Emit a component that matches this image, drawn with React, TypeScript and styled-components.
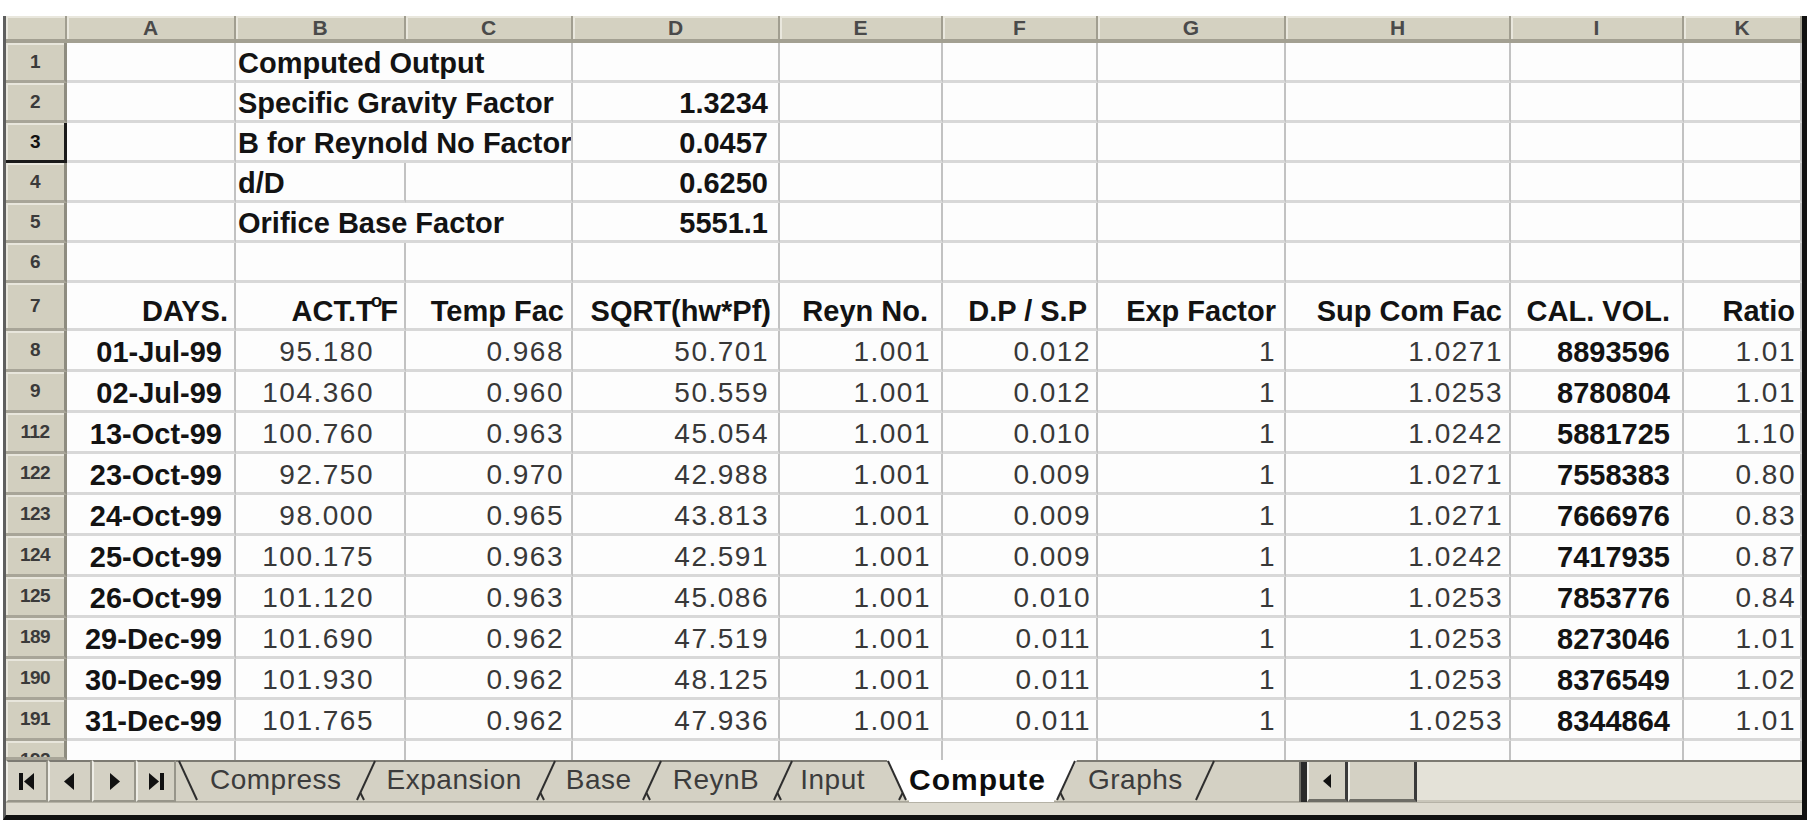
import React from "react";
import styled, { createGlobalStyle } from "styled-components";

const GlobalStyle = createGlobalStyle`
  *, *::before, *::after { box-sizing: border-box; }
  html, body { margin: 0; padding: 0; background: #fff; }
  body { font-family: "Liberation Sans", Arial, sans-serif; }
`;

type Align = "left" | "right";

type CellDef = {
  text?: React.ReactNode;
  bold?: boolean;
  align?: Align;
  span?: number;
  pad?: number;
};

const columns = ["A", "B", "C", "D", "E", "F", "G", "H", "I", "K"];

const topRows: { label: string; cells: CellDef[] }[] = [
  { label: "1", cells: [{}, { text: "Computed Output", bold: true, align: "left", span: 2 }, {}, {}, {}, {}, {}, {}, {}] },
  { label: "2", cells: [{}, { text: "Specific Gravity Factor", bold: true, align: "left", span: 2 }, { text: "1.3234", bold: true, pad: 10 }, {}, {}, {}, {}, {}, {}] },
  { label: "3", cells: [{}, { text: "B for Reynold No Factor", bold: true, align: "left", span: 2 }, { text: "0.0457", bold: true, pad: 10 }, {}, {}, {}, {}, {}, {}] },
  { label: "4", cells: [{}, { text: "d/D", bold: true, align: "left" }, {}, { text: "0.6250", bold: true, pad: 10 }, {}, {}, {}, {}, {}, {}] },
  { label: "5", cells: [{}, { text: "Orifice Base Factor", bold: true, align: "left", span: 2 }, { text: "5551.1", bold: true, pad: 10 }, {}, {}, {}, {}, {}, {}] },
  { label: "6", cells: [{}, {}, {}, {}, {}, {}, {}, {}, {}, {}] },
];

const headPads = [6, 6, 7, 7, 13, 9, 8, 7, 12, 5];
const dataPads = [12, 30, 7, 9, 10, 5, 8, 6, 12, 4];
const boldCols = [0, 8];

const dataRows = [
  ["8", "01-Jul-99", "95.180", "0.968", "50.701", "1.001", "0.012", "1", "1.0271", "8893596", "1.01"],
  ["9", "02-Jul-99", "104.360", "0.960", "50.559", "1.001", "0.012", "1", "1.0253", "8780804", "1.01"],
  ["112", "13-Oct-99", "100.760", "0.963", "45.054", "1.001", "0.010", "1", "1.0242", "5881725", "1.10"],
  ["122", "23-Oct-99", "92.750", "0.970", "42.988", "1.001", "0.009", "1", "1.0271", "7558383", "0.80"],
  ["123", "24-Oct-99", "98.000", "0.965", "43.813", "1.001", "0.009", "1", "1.0271", "7666976", "0.83"],
  ["124", "25-Oct-99", "100.175", "0.963", "42.591", "1.001", "0.009", "1", "1.0242", "7417935", "0.87"],
  ["125", "26-Oct-99", "101.120", "0.963", "45.086", "1.001", "0.010", "1", "1.0253", "7853776", "0.84"],
  ["189", "29-Dec-99", "101.690", "0.962", "47.519", "1.001", "0.011", "1", "1.0253", "8273046", "1.01"],
  ["190", "30-Dec-99", "101.930", "0.962", "48.125", "1.001", "0.011", "1", "1.0253", "8376549", "1.02"],
  ["191", "31-Dec-99", "101.765", "0.962", "47.936", "1.001", "0.011", "1", "1.0253", "8344864", "1.01"],
];

type EdgeKind = "start" | "join" | "activeStart" | "activeEnd" | "end";

const tabs: { name: string; padL: number; padR: number; after: EdgeKind; active?: boolean }[] = [
  { name: "Compress", padL: 10, padR: 12, after: "join" },
  { name: "Expansion", padL: 9, padR: 12, after: "join" },
  { name: "Base", padL: 8, padR: 8, after: "join" },
  { name: "ReynB", padL: 9, padR: 12, after: "join" },
  { name: "Input", padL: 5, padR: 20, after: "activeStart" },
  { name: "Compute", padL: 0, padR: 8, after: "activeEnd", active: true },
  { name: "Graphs", padL: 10, padR: 10, after: "end" },
];

const TabEdge = ({ kind }: { kind: EdgeKind }) => (
  <EdgeSvg width="24" height="42" viewBox="0 0 24 42">
    {kind === "activeStart" && <polygon points="2,0 24,0 24,40 21,40" fill="#fff" />}
    {kind === "activeEnd" && <polygon points="0,0 23,0 3,40 0,40" fill="#fff" />}
    {(kind === "start" || kind === "activeStart") && (
      <line x1="3" y1="1" x2="21" y2="40" stroke="#2e2e2e" strokeWidth="2" />
    )}
    {(kind === "join" || kind === "activeEnd" || kind === "end") && (
      <line x1="3" y1="40" x2="21" y2="1" stroke="#2e2e2e" strokeWidth="2" />
    )}
    {(kind === "join" || kind === "activeEnd") && (
      <line x1="6.5" y1="33" x2="10" y2="40" stroke="#2e2e2e" strokeWidth="2" />
    )}
    {kind === "activeStart" && (
      <line x1="14" y1="40" x2="17.6" y2="33" stroke="#2e2e2e" strokeWidth="2" />
    )}
  </EdgeSvg>
);

const NavGlyph = ({ kind }: { kind: "first" | "prev" | "next" | "last" }) => (
  <svg width="16" height="19" viewBox="0 0 16 19">
    {kind === "first" && (
      <>
        <rect x="0" y="1" width="4" height="17" fill="#111" />
        <polygon points="15,1 5,9.5 15,18" fill="#111" />
      </>
    )}
    {kind === "prev" && <polygon points="12,1 2,9.5 12,18" fill="#111" />}
    {kind === "next" && <polygon points="4,1 14,9.5 4,18" fill="#111" />}
    {kind === "last" && (
      <>
        <polygon points="1,1 11,9.5 1,18" fill="#111" />
        <rect x="12" y="1" width="4" height="17" fill="#111" />
      </>
    )}
  </svg>
);

export default function App() {
  return (
    <>
      <GlobalStyle />
      <Frame>
        <Sheet>
          <ColHead />
          {columns.map(c => (
            <ColHead key={c}>{c}</ColHead>
          ))}

          {topRows.map(r => (
            <React.Fragment key={r.label}>
              <RowHead $active={r.label === "3"}>{r.label}</RowHead>
              {r.cells.map((c, i) => (
                <Cell
                  key={i}
                  $bold={c.bold}
                  $align={c.align}
                  $span={c.span}
                  $pad={c.pad}
                >
                  {c.text}
                </Cell>
              ))}
            </React.Fragment>
          ))}

          <RowHead>7</RowHead>
          {[
            "DAYS.",
            <>
              ACT.T<Degree>o</Degree>F
            </>,
            "Temp Fac",
            "SQRT(hw*Pf)",
            "Reyn No.",
            "D.P / S.P",
            "Exp Factor",
            "Sup Com Fac",
            "CAL. VOL.",
            "Ratio",
          ].map((h, i) => (
            <Cell key={i} $bold $pad={headPads[i]}>
              {h}
            </Cell>
          ))}

          {dataRows.map(([label, ...vals]) => (
            <React.Fragment key={label}>
              <RowHead>{label}</RowHead>
              {vals.map((v, i) => (
                <Cell key={i} $bold={boldCols.includes(i)} $pad={dataPads[i]}>
                  {v}
                </Cell>
              ))}
            </React.Fragment>
          ))}

          <RowHead $partial>192</RowHead>
          {columns.map(c => (
            <Cell key={c} $last />
          ))}
        </Sheet>

        <TabStrip>
          <NavGroup>
            <NavButton $w={42}>
              <NavGlyph kind="first" />
            </NavButton>
            <NavButton $w={44}>
              <NavGlyph kind="prev" />
            </NavButton>
            <NavButton $w={44}>
              <NavGlyph kind="next" />
            </NavButton>
            <NavButton $w={40}>
              <NavGlyph kind="last" />
            </NavButton>
          </NavGroup>

          <TabRow>
            <TabEdge kind="start" />
            {tabs.map(t => (
              <React.Fragment key={t.name}>
                <TabLabel $active={t.active} $padL={t.padL} $padR={t.padR}>
                  {t.name}
                </TabLabel>
                <TabEdge kind={t.after} />
              </React.Fragment>
            ))}
          </TabRow>

          <Spacer />

          <ScrollArea>
            <Splitter />
            <ScrollButton>
              <svg width="9" height="14" viewBox="0 0 9 14">
                <polygon points="8,0 0,7 8,14" fill="#111" />
              </svg>
            </ScrollButton>
            <Thumb />
            <Track />
          </ScrollArea>
        </TabStrip>
        <BottomBand />
      </Frame>
    </>
  );
}

const Frame = styled.div`
  margin: 16px 0 0 3px;
  width: 1804px;
  border-left: 3px solid #5f5f5f;
  border-right: 5px solid #111;
  border-bottom: 5px solid #111;
  display: flex;
  flex-direction: column;
`;

const Sheet = styled.div`
  display: grid;
  grid-template-columns: 61px 169px 170px 167px 207px 163px 155px 188px 225px 173px 118px;
  grid-template-rows: 27px repeat(6, 40px) 48px repeat(10, 41px) 19px;
  background: #fdfdfd;
  overflow: hidden;
`;

const ColHead = styled.div`
  display: flex;
  align-items: center;
  justify-content: center;
  background: #d4d1c1;
  border-right: 2px solid #a19e90;
  border-bottom: 4px solid #a3a092;
  box-shadow: inset 2px 2px 0 #e9e7dd;
  font-size: 21px;
  font-weight: 700;
  color: #4a4a4a;
`;

const RowHead = styled.div<{ $active?: boolean; $partial?: boolean }>`
  display: flex;
  align-items: ${p => (p.$partial ? "flex-start" : "center")};
  justify-content: center;
  padding-top: ${p => (p.$partial ? 8 : 0)}px;
  overflow: hidden;
  background: #d2cfbf;
  border-right: 3px solid ${p => (p.$active ? "#1a1a1a" : "#8e8c80")};
  border-bottom: 3px solid ${p => (p.$active ? "#1a1a1a" : "#a8a598")};
  box-shadow: inset 2px 2px 0 #e8e6dc;
  font-size: 19px;
  font-weight: 700;
  letter-spacing: -0.5px;
  color: ${p => (p.$active ? "#111" : "#3a3a3a")};
`;

const Cell = styled.div<{
  $bold?: boolean;
  $align?: Align;
  $span?: number;
  $pad?: number;
  $last?: boolean;
}>`
  display: flex;
  align-items: flex-end;
  justify-content: ${p => (p.$align === "left" ? "flex-start" : "flex-end")};
  grid-column: span ${p => p.$span ?? 1};
  padding: 0 ${p => (p.$align === "left" ? 0 : p.$pad ?? 8)}px 4px
    ${p => (p.$align === "left" ? 2 : 0)}px;
  border-right: 2px solid #c2c2c2;
  border-bottom: ${p => (p.$last ? "none" : "3px solid #d8d8d8")};
  white-space: nowrap;
  overflow: hidden;
  line-height: 26px;
  font-size: ${p => (p.$bold ? 29 : 28)}px;
  font-weight: ${p => (p.$bold ? 700 : 400)};
  letter-spacing: ${p => (p.$bold ? 0 : 1.5)}px;
  color: ${p => (p.$bold ? "#131313" : "#383838")};
`;

const Degree = styled.span`
  font-size: 19px;
  position: relative;
  top: -10px;
  margin: 0 -2px 0 -3px;
`;

const TabStrip = styled.div`
  display: flex;
  height: 42px;
  background: #d4d1c4;
  box-shadow: inset 0 2px 0 #7c7a72, inset 0 -1px 0 #a9a69a;
`;

const NavGroup = styled.div`
  display: flex;
`;

const NavButton = styled.div<{ $w: number }>`
  width: ${p => p.$w}px;
  display: flex;
  align-items: center;
  justify-content: center;
  border-top: 2px solid #7c7a72;
  border-left: 2px solid #eeede6;
  border-right: 2px solid #97958a;
  border-bottom: 2px solid #97958a;
`;

const TabRow = styled.div`
  display: flex;
  align-items: stretch;
`;

const EdgeSvg = styled.svg`
  display: block;
  flex-shrink: 0;
`;

const TabLabel = styled.div<{ $active?: boolean; $padL: number; $padR: number }>`
  display: flex;
  align-items: center;
  padding: 0 ${p => p.$padR}px 2px ${p => p.$padL}px;
  background: ${p => (p.$active ? "#fff" : "transparent")};
  font-size: ${p => (p.$active ? 30 : 28)}px;
  font-weight: ${p => (p.$active ? 700 : 400)};
  letter-spacing: ${p => (p.$active ? 1 : 0.5)}px;
  color: ${p => (p.$active ? "#0d0d0d" : "#3c3c3c")};
  white-space: nowrap;
`;

const Spacer = styled.div`
  flex: 1;
`;

const ScrollArea = styled.div`
  width: 503px;
  flex-shrink: 0;
  display: flex;
  padding-top: 2px;
`;

const Splitter = styled.div`
  width: 8px;
  background: #2b2b2b;
  border-left: 2px solid #6e6d66;
`;

const ScrollButton = styled.div`
  width: 41px;
  display: flex;
  align-items: center;
  justify-content: center;
  background: #d4d1c4;
  border-left: 2px solid #f1f0ea;
  border-right: 3px solid #3a3a3a;
  border-bottom: 3px solid #6e6d66;
`;

const Thumb = styled.div`
  width: 69px;
  background: #d4d1c4;
  border-left: 2px solid #f1f0ea;
  border-right: 3px solid #3a3a3a;
  border-bottom: 3px solid #6e6d66;
`;

const Track = styled.div`
  flex: 1;
  background: #e4e2d8;
  border-bottom: 2px solid #c9c6ba;
`;

const BottomBand = styled.div`
  height: 13px;
  background: #dddacf;
  border-top: 1px solid #b5b2a6;
`;
